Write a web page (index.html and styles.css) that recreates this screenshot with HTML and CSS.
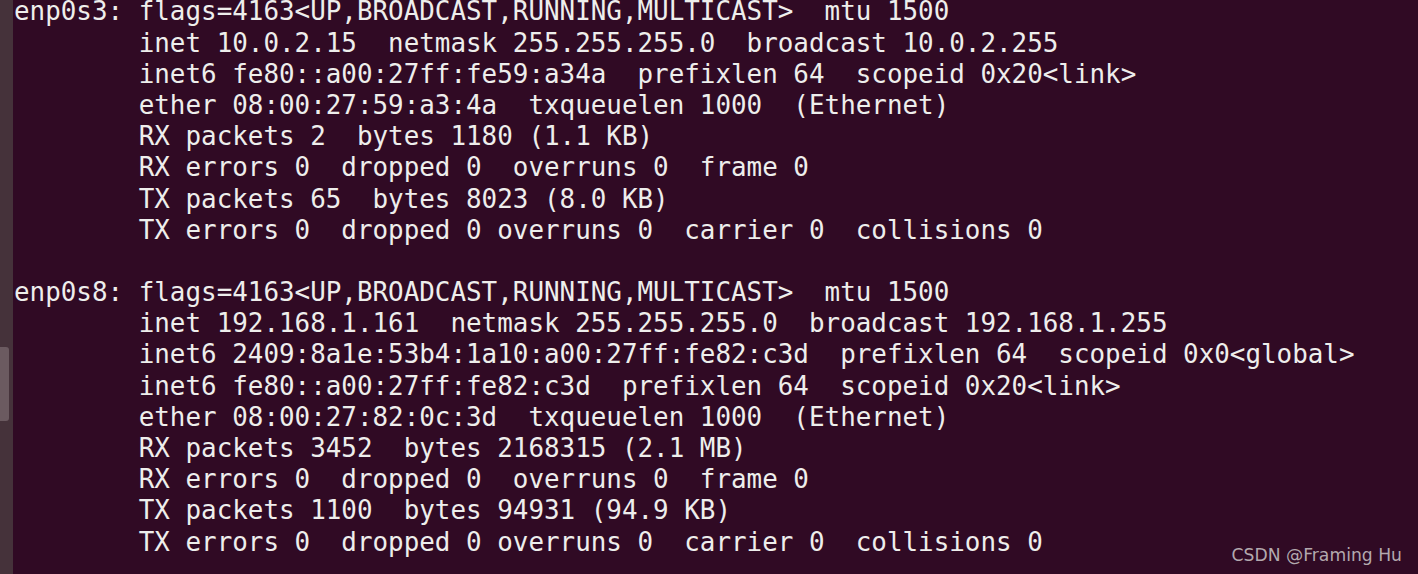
FILE: index.html
```html
<!DOCTYPE html>
<html>
<head>
<meta charset="utf-8">
<link rel="stylesheet" href="styles.css">
</head>
<body>
<div class="window">
  <div class="sidebar"><div class="thumb"></div></div>
  <div class="terminal">
<pre class="out">enp0s3: flags=4163&lt;UP,BROADCAST,RUNNING,MULTICAST&gt;  mtu 1500
        inet 10.0.2.15  netmask 255.255.255.0  broadcast 10.0.2.255
        inet6 fe80::a00:27ff:fe59:a34a  prefixlen 64  scopeid 0x20&lt;link&gt;
        ether 08:00:27:59:a3:4a  txqueuelen 1000  (Ethernet)
        RX packets 2  bytes 1180 (1.1 KB)
        RX errors 0  dropped 0  overruns 0  frame 0
        TX packets 65  bytes 8023 (8.0 KB)
        TX errors 0  dropped 0 overruns 0  carrier 0  collisions 0

enp0s8: flags=4163&lt;UP,BROADCAST,RUNNING,MULTICAST&gt;  mtu 1500
        inet 192.168.1.161  netmask 255.255.255.0  broadcast 192.168.1.255
        inet6 2409:8a1e:53b4:1a10:a00:27ff:fe82:c3d  prefixlen 64  scopeid 0x0&lt;global&gt;
        inet6 fe80::a00:27ff:fe82:c3d  prefixlen 64  scopeid 0x20&lt;link&gt;
        ether 08:00:27:82:0c:3d  txqueuelen 1000  (Ethernet)
        RX packets 3452  bytes 2168315 (2.1 MB)
        RX errors 0  dropped 0  overruns 0  frame 0
        TX packets 1100  bytes 94931 (94.9 KB)
        TX errors 0  dropped 0 overruns 0  carrier 0  collisions 0</pre>
    <div class="watermark">CSDN @Framing Hu</div>
  </div>
</div>
</body>
</html>
```
FILE: styles.css
```css
html, body {
  margin: 0;
  padding: 0;
  width: 1418px;
  height: 574px;
  overflow: hidden;
  background: #300a24;
}
.window {
  display: flex;
  width: 1418px;
  height: 574px;
}
.sidebar {
  width: 13px;
  flex: none;
  background: #45323a;
  padding-top: 347px;
  box-sizing: border-box;
}
.thumb {
  width: 9px;
  height: 74px;
  background: #6b5a60;
  border-radius: 0 3px 3px 0;
}
.terminal {
  flex: 1;
  position: relative;
  background: #300a24;
  overflow: hidden;
}
.out {
  width: max-content;
  margin: -3.6px 0 0 1px;
  font-family: "DejaVu Sans Mono", monospace;
  font-size: 25.9px;
  line-height: 31.18px;
  color: #eeeeec;
  white-space: pre;
}
.watermark {
  position: absolute;
  right: 16px;
  bottom: 9px;
  font-family: "DejaVu Sans", "Noto Sans", sans-serif;
  font-size: 17.2px;
  color: #b3a9ae;
}
```
